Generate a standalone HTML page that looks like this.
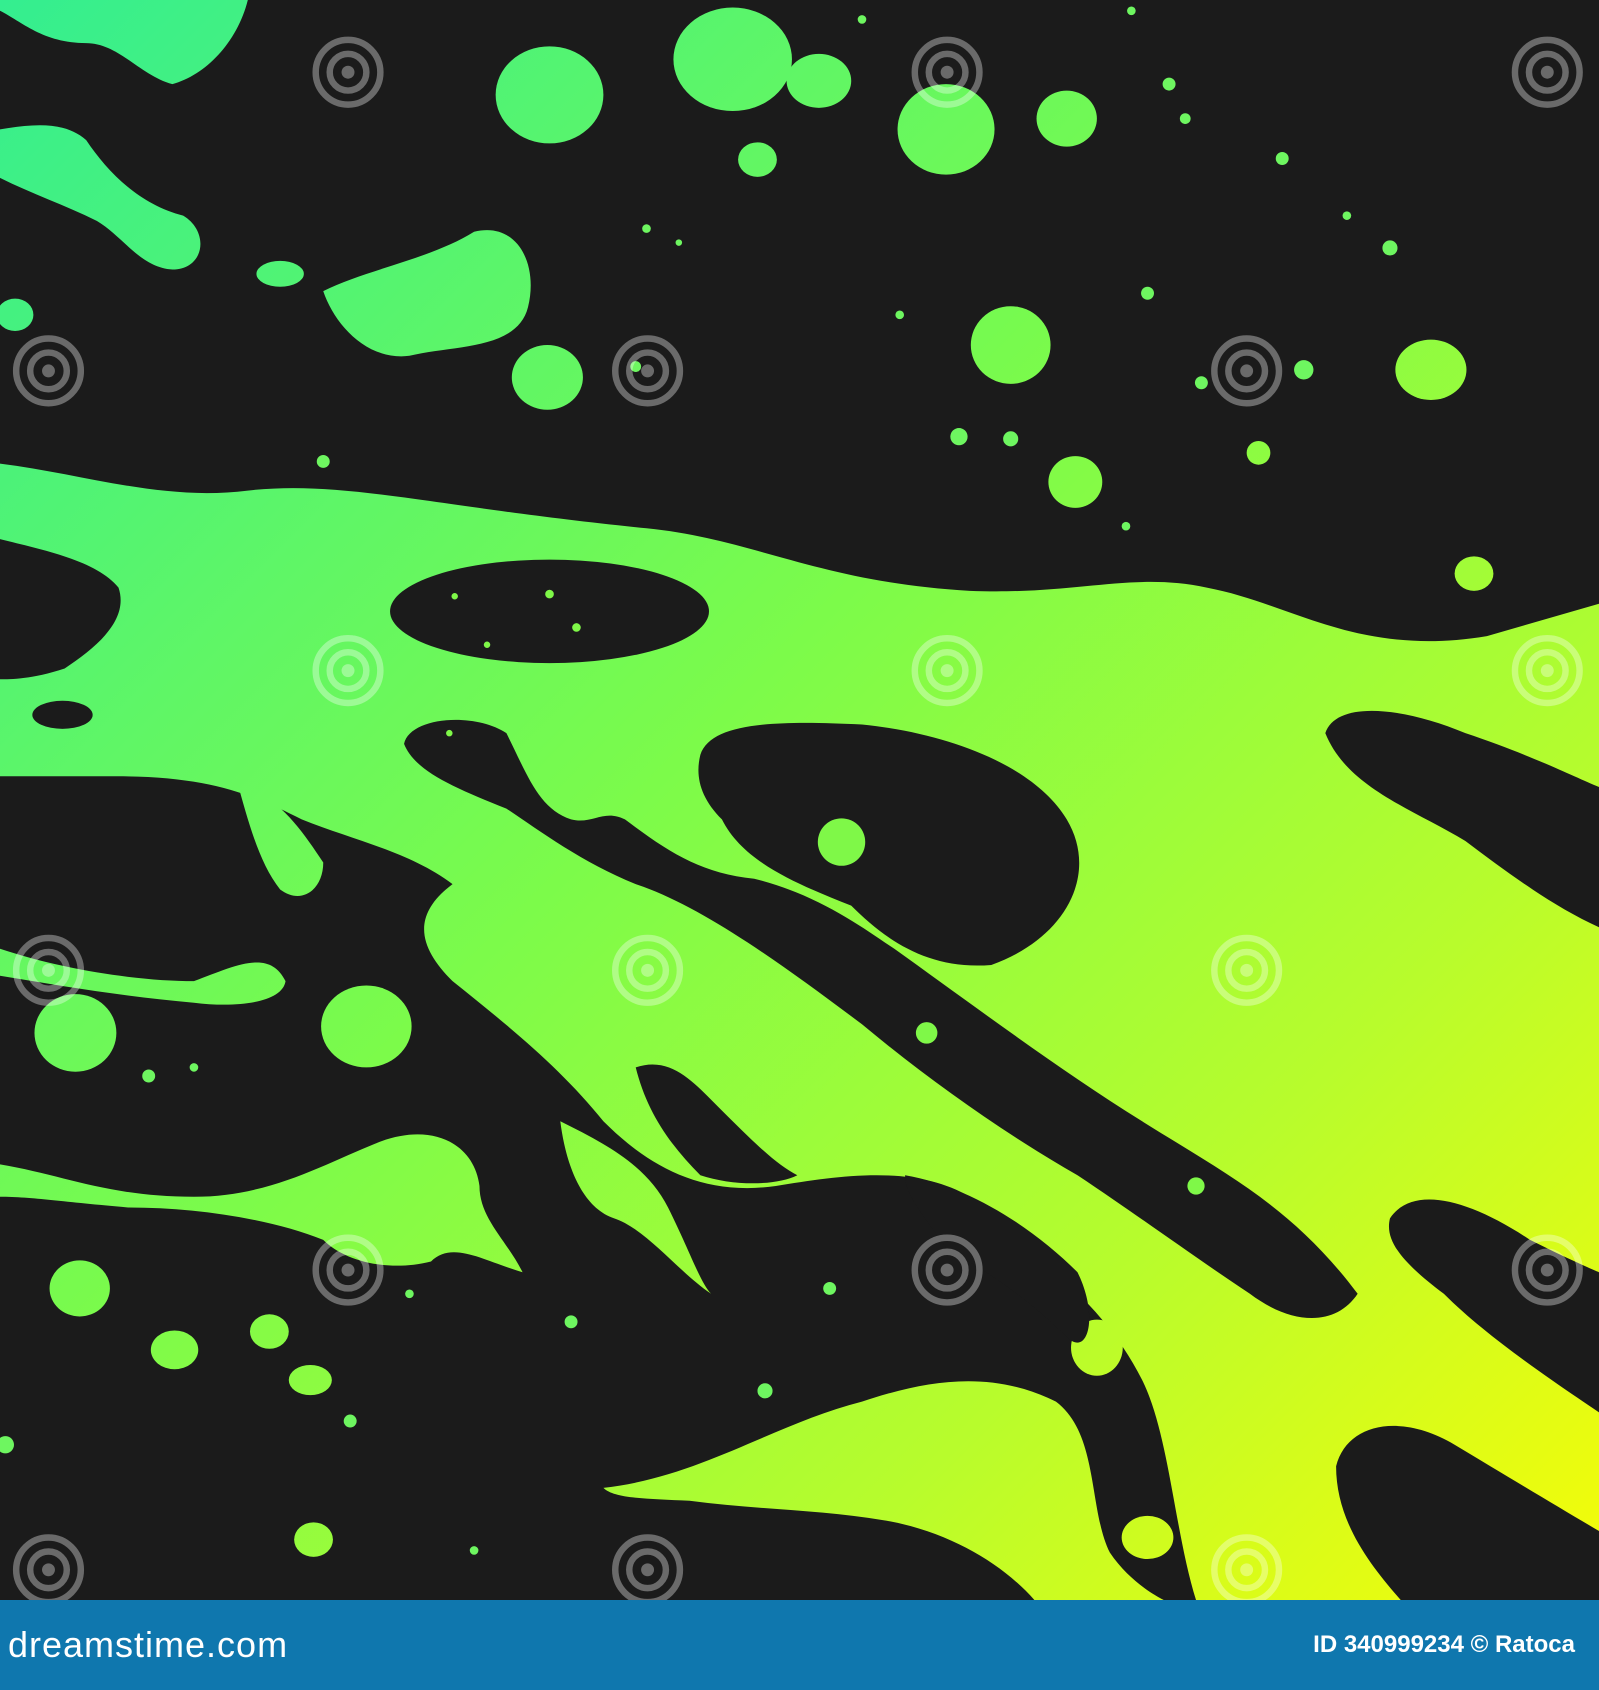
<!DOCTYPE html>
<html><head><meta charset="utf-8"><style>
html,body{margin:0;padding:0;width:1599px;height:1690px;overflow:hidden;background:#1b1b1b}
svg{display:block}
.bar{position:absolute;left:0;top:1600px;width:1599px;height:90px;background:#0f77ae;color:#fff;font-family:"Liberation Sans",sans-serif}
.logo{position:absolute;left:8px;top:24px;font-size:36px;letter-spacing:1px}
.id{position:absolute;right:24px;top:31px;font-size:24px;font-weight:bold}
</style></head><body>
<svg width="1599" height="1600" viewBox="0 0 1484 1484" preserveAspectRatio="none">
<defs>
<linearGradient id="g" gradientUnits="userSpaceOnUse" x1="0" y1="0" x2="1484" y2="1484">
<stop offset="0" stop-color="#34ee90"/><stop offset="0.45" stop-color="#7cfb4a"/><stop offset="0.75" stop-color="#b8fc2c"/><stop offset="1" stop-color="#f6fc08"/>
</linearGradient>
<g id="w" fill="none" stroke="#fff" stroke-opacity="0.35" stroke-width="6"><circle r="30"/><circle r="17"/><circle r="6" fill="#fff" fill-opacity="0.35" stroke="none"/></g>
</defs>
<rect width="1484" height="1484" fill="#1b1b1b"/>
<g fill="url(#g)">
<path d="M0,430 C80,440 150,465 230,455 C320,445 400,470 600,490 C700,500 760,540 900,548 C1000,552 1050,530 1120,545 C1200,560 1260,610 1380,590 L1484,560 L1484,1484 L1110,1484 C1090,1420 1085,1330 1060,1280 C1020,1200 950,1160 900,1110 C850,1080 780,1090 720,1100 C650,1110 600,1080 560,1040 C520,990 470,950 420,910 C390,880 380,850 420,820 C380,790 330,780 280,760 C240,740 200,720 110,720 L0,720 Z"/>
<path d="M0,1080 C60,1090 100,1110 180,1110 C250,1110 300,1080 350,1060 C400,1040 440,1060 445,1100 C445,1130 470,1150 485,1180 C450,1170 420,1150 400,1170 C360,1180 320,1170 300,1150 C250,1130 180,1120 120,1120 C60,1115 30,1110 0,1110 Z"/>
<path d="M560,1380 C650,1370 720,1320 800,1300 C860,1280 920,1270 980,1300 C1020,1330 1010,1400 1030,1440 C1050,1470 1080,1484 1080,1484 L960,1484 C930,1450 880,1420 820,1410 C760,1400 700,1400 640,1392 C600,1390 570,1390 560,1380 Z"/>
<path d="M0,0 L230,0 C220,40 190,70 160,78 C130,70 110,40 80,40 C40,40 20,20 0,10 Z"/>
<path d="M0,120 C30,115 60,112 80,130 C100,160 130,190 170,200 C195,215 190,250 160,250 C130,248 115,220 90,205 C60,190 30,180 0,165 Z"/>
<path d="M300,270 C340,250 400,240 440,215 C480,205 500,245 490,285 C480,325 420,320 380,330 C340,335 310,300 300,270 Z"/>
<ellipse cx="510" cy="88" rx="50" ry="45"/><ellipse cx="680" cy="55" rx="55" ry="48"/><ellipse cx="760" cy="75" rx="30" ry="25"/>
<ellipse cx="878" cy="120" rx="45" ry="42"/><ellipse cx="990" cy="110" rx="28" ry="26"/><ellipse cx="703" cy="148" rx="18" ry="16"/>
<ellipse cx="508" cy="350" rx="33" ry="30"/><ellipse cx="938" cy="320" rx="37" ry="36"/><ellipse cx="1328" cy="343" rx="33" ry="28"/>
<ellipse cx="998" cy="447" rx="25" ry="24"/><ellipse cx="1368" cy="532" rx="18" ry="16"/><ellipse cx="14" cy="292" rx="17" ry="15"/>
<ellipse cx="260" cy="254" rx="22" ry="12"/><ellipse cx="1168" cy="420" rx="11" ry="11"/>
<ellipse cx="340" cy="952" rx="42" ry="38"/><ellipse cx="70" cy="958" rx="38" ry="36"/><path d="M0,880 C60,900 130,910 180,910 C220,895 250,880 265,910 C262,930 220,935 180,930 C120,925 60,915 0,905 Z"/>
<path d="M220,725 C260,740 280,770 300,800 C300,825 280,840 260,825 C240,800 230,760 220,725 Z"/>
<ellipse cx="74" cy="1195" rx="28" ry="26"/><ellipse cx="162" cy="1252" rx="22" ry="18"/><ellipse cx="250" cy="1235" rx="18" ry="16"/>
<ellipse cx="288" cy="1280" rx="20" ry="14"/><ellipse cx="291" cy="1428" rx="18" ry="16"/><ellipse cx="1018" cy="1250" rx="24" ry="26"/>
<ellipse cx="1065" cy="1426" rx="24" ry="20"/>
<path d="M520,1040 C560,1060 600,1080 620,1120 C640,1160 650,1190 660,1200 C630,1180 600,1140 570,1130 C540,1120 525,1080 520,1040 Z"/>
</g>
<g fill="#1b1b1b">
<ellipse cx="510" cy="567" rx="148" ry="48"/>
<path d="M650,700 C660,670 720,668 800,672 C880,680 960,710 990,760 C1020,810 990,870 920,895 C860,900 820,870 790,840 C740,820 690,800 670,760 C650,740 645,720 650,700 Z"/>
<path d="M375,690 C380,665 440,660 470,680 C490,720 500,750 530,760 C550,765 560,750 580,760 C620,790 650,810 700,815 C760,830 800,860 830,880 C900,930 980,990 1060,1040 C1140,1090 1200,1120 1260,1200 C1240,1230 1200,1230 1160,1200 C1100,1160 1060,1130 1000,1090 C930,1050 860,1000 800,950 C720,890 650,840 590,820 C540,800 500,770 470,750 C420,730 385,715 375,690 Z"/>
<path d="M1230,680 C1240,650 1300,655 1360,680 C1420,700 1460,720 1484,730 L1484,860 C1440,840 1400,810 1360,780 C1310,750 1250,730 1230,680 Z"/>
<path d="M1290,1130 C1310,1100 1360,1110 1420,1150 C1460,1170 1484,1180 1484,1180 L1484,1310 C1440,1280 1380,1240 1340,1200 C1300,1170 1285,1150 1290,1130 Z"/>
<path d="M1240,1360 C1250,1320 1300,1310 1350,1340 C1400,1370 1450,1400 1484,1420 L1484,1484 L1300,1484 C1270,1450 1240,1410 1240,1360 Z"/>
<path d="M590,990 C620,980 640,1000 660,1020 C700,1060 720,1080 740,1090 C720,1100 680,1100 650,1090 C620,1060 600,1030 590,990 Z"/>
<path d="M840,1090 C900,1100 960,1140 1000,1180 C1020,1220 1010,1260 990,1240 C960,1210 920,1180 880,1160 C860,1130 840,1110 840,1090 Z"/>
<path d="M0,500 C40,510 90,520 110,545 C120,575 90,600 60,620 C30,630 10,630 0,630 Z"/>
<ellipse cx="58" cy="663" rx="28" ry="13"/>
</g>
<g fill="#7ff848">
<circle cx="422" cy="553" r="3"/><circle cx="510" cy="551" r="4"/><circle cx="535" cy="582" r="4"/><circle cx="452" cy="598" r="3"/>
<circle cx="781" cy="781" r="22"/><circle cx="417" cy="680" r="3"/><circle cx="860" cy="958" r="10"/><circle cx="1110" cy="1100" r="8"/>
</g>
<g fill="#6ef660">
<circle cx="600" cy="212" r="4"/><circle cx="630" cy="225" r="3"/><circle cx="890" cy="405" r="8"/><circle cx="938" cy="407" r="7"/><circle cx="300" cy="428" r="6"/><circle cx="1115" cy="355" r="6"/><circle cx="1210" cy="343" r="9"/><circle cx="1065" cy="272" r="6"/><circle cx="1190" cy="147" r="6"/><circle cx="1085" cy="78" r="6"/><circle cx="1100" cy="110" r="5"/><circle cx="1290" cy="230" r="7"/><circle cx="1250" cy="200" r="4"/><circle cx="1045" cy="488" r="4"/><circle cx="835" cy="292" r="4"/><circle cx="800" cy="18" r="4"/><circle cx="1050" cy="10" r="4"/><circle cx="590" cy="340" r="5"/><circle cx="138" cy="998" r="6"/><circle cx="180" cy="990" r="4"/><circle cx="380" cy="1200" r="4"/><circle cx="325" cy="1318" r="6"/><circle cx="440" cy="1438" r="4"/><circle cx="5" cy="1340" r="8"/><circle cx="530" cy="1226" r="6"/><circle cx="710" cy="1290" r="7"/><circle cx="770" cy="1195" r="6"/>
</g>
<use href="#w" x="323" y="67"/><use href="#w" x="879" y="67"/><use href="#w" x="1436" y="67"/>
<use href="#w" x="45" y="344"/><use href="#w" x="601" y="344"/><use href="#w" x="1157" y="344"/>
<use href="#w" x="323" y="622"/><use href="#w" x="879" y="622"/><use href="#w" x="1436" y="622"/>
<use href="#w" x="45" y="900"/><use href="#w" x="601" y="900"/><use href="#w" x="1157" y="900"/>
<use href="#w" x="323" y="1178"/><use href="#w" x="879" y="1178"/><use href="#w" x="1436" y="1178"/>
<use href="#w" x="45" y="1456"/><use href="#w" x="601" y="1456"/><use href="#w" x="1157" y="1456"/>
</svg>
<div class="bar"><div class="logo">dreamstime.com</div><div class="id">ID 340999234 © Ratoca</div></div>
</body></html>
